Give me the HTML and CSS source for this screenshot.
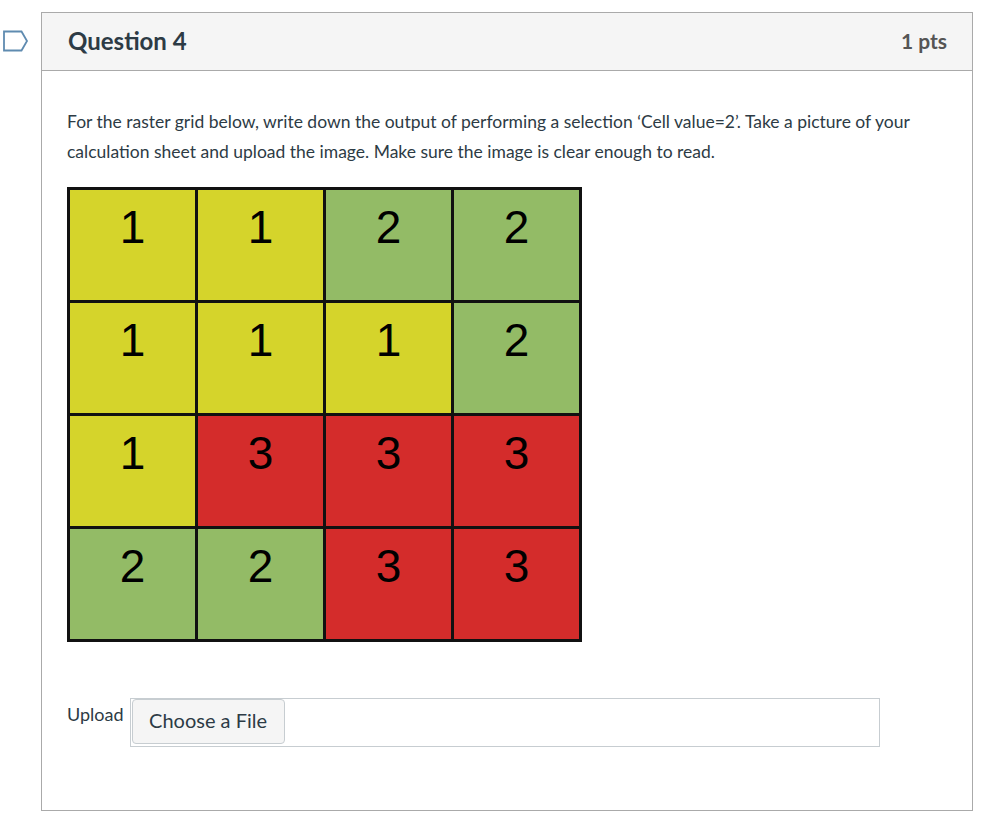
FILE: index.html
```html
<!DOCTYPE html>
<html>
<head>
<meta charset="utf-8">
<link rel="stylesheet" href="styles.css">
</head>
<body>
<div class="page">
  <div class="flag-col">
    <svg class="flag" width="30" height="24" viewBox="0 0 30 24">
      <path d="M5 2.5 H22.5 L28 12 L22.5 21.5 H5 Z" fill="none" stroke="#5f8bb0" stroke-width="1.8" stroke-linejoin="miter"/>
    </svg>
  </div>
  <div class="card">
    <div class="header">
      <div class="title">Question 4</div>
      <div class="points">1 pts</div>
    </div>
    <div class="body">
      <p class="text">For the raster grid below, write down the output of performing a selection ‘Cell value=2’. Take a picture of your calculation sheet and upload the image. Make sure the image is clear enough to read.</p>
      <div class="grid">
        <div class="cell y">1</div><div class="cell y">1</div><div class="cell g">2</div><div class="cell g">2</div>
        <div class="cell y">1</div><div class="cell y">1</div><div class="cell y">1</div><div class="cell g">2</div>
        <div class="cell y">1</div><div class="cell r">3</div><div class="cell r">3</div><div class="cell r">3</div>
        <div class="cell g">2</div><div class="cell g">2</div><div class="cell r">3</div><div class="cell r">3</div>
      </div>
      <div class="upload">
        <div class="upload-label">Upload</div>
        <div class="file-box">
          <div class="file-btn">Choose a File</div>
        </div>
      </div>
    </div>
  </div>
</div>
</body>
</html>
```
FILE: styles.css
```css
html, body {
  margin: 0;
  padding: 0;
  background: #fff;
}
body {
  font-family: Lato, "Open Sans", sans-serif;
  color: #2d3b45;
}
.page {
  display: flex;
  align-items: flex-start;
  padding-top: 12px;
}
.flag-col {
  width: 41px;
  flex: none;
  padding-top: 17px;
}
.flag {
  display: block;
  margin-left: -1px;
}
.card {
  width: 930px;
  border: 1px solid #aaaaaa;
  flex: none;
}
.header {
  height: 57px;
  background: #f5f5f5;
  border-bottom: 1px solid #aaaaaa;
  display: flex;
  align-items: center;
  justify-content: space-between;
  padding: 0 25px 0 26px;
}
.title {
  font-weight: 700;
  font-size: 24px;
  color: #2d3b45;
  margin-top: -2px;
}
.points {
  font-weight: 700;
  font-size: 21px;
  color: #555555;
  margin-top: -2px;
}
.body {
  padding: 36px 25px 63px 25px;
}
.text {
  margin: 0;
  font-size: 17.5px;
  line-height: 30px;
  color: #2d3b45;
}
.grid {
  margin-top: 20px;
  width: 515px;
  display: grid;
  grid-template-columns: repeat(4, 1fr);
  grid-auto-rows: 110px;
  gap: 3px;
  padding: 3px;
  background: #111;
  box-sizing: border-box;
}
.cell {
  font-family: "Liberation Sans", Arial, sans-serif;
  font-size: 46px;
  line-height: 46px;
  text-align: center;
  color: #000;
  padding-top: 14px;
  box-sizing: border-box;
}
.y { background: #d5d42b; }
.g { background: #93bb66; }
.r { background: #d42c2b; }
.upload {
  margin-top: 56px;
  display: flex;
  align-items: flex-start;
  gap: 6px;
}
.upload-label {
  font-size: 18px;
  line-height: 22px;
  padding-top: 5px;
  color: #2d3b45;
}
.file-box {
  width: 748px;
  height: 47px;
  border: 1px solid #c7cdd1;
  display: flex;
}
.file-btn {
  width: 153px;
  height: 45px;
  margin: 0 0 0 1px;
  padding-bottom: 4px;
  box-sizing: border-box;
  border: 1px solid #c7cdd1;
  border-radius: 4px;
  background: #f5f5f5;
  font-size: 20px;
  display: flex;
  align-items: center;
  justify-content: center;
  color: #2d3b45;
}
```
